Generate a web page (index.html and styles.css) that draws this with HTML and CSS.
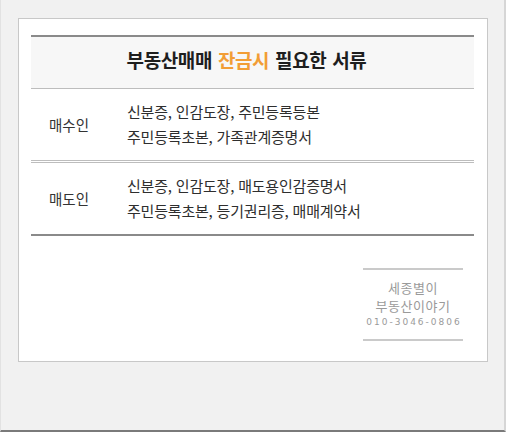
FILE: index.html
```html
<!DOCTYPE html>
<html lang="ko">
<head>
    <meta charset="UTF-8">
    <meta name="viewport" content="width=device-width, initial-scale=1.0">
    <title>잔금시 필요한 서류</title>
    <link rel="stylesheet" href="styles.css">
</head>
<body>

    <!-- Main white card -->
    <div class="card">

        <div class="doc-table">
            <!-- Title -->
            <div class="doc-title">
                부동산매매 <span class="highlight">잔금시</span> 필요한 서류
            </div>

            <!-- Buyer -->
            <div class="doc-row buyer">
                <div class="doc-label">매수인</div>
                <div class="doc-items">
                    신분증, 인감도장, 주민등록등본<br>
                    주민등록초본, 가족관계증명서
                </div>
            </div>

            <!-- Seller -->
            <div class="doc-row seller">
                <div class="doc-label">매도인</div>
                <div class="doc-items">
                    신분증, 인감도장, 매도용인감증명서<br>
                    주민등록초본, 등기권리증, 매매계약서
                </div>
            </div>
        </div>

        <!-- Signature -->
        <div class="signature">
            <div class="sig-name">세종별이</div>
            <div class="sig-name">부동산이야기</div>
            <div class="sig-phone">010-3046-0806</div>
        </div>

    </div>

</body>
</html>
```

FILE: styles.css
```css
* {
    box-sizing: border-box;
}
body {
    margin: 0;
    height: 432px;
    background-color: #f1f1f1;
    border-left: 1px solid #e2e2e2;
    border-right: 2px solid #d6d6d6;
    border-bottom: 2px solid #7a7a7a;
    padding-top: 18px;
    padding-left: 17px;
    font-family: 'Noto Sans CJK KR', 'Noto Sans', sans-serif;
    color: #333;
}
.card {
    width: 470px;
    height: 344px;
    background-color: #fff;
    border: 1px solid #c8c8c8;
    padding: 16px 13px 0 12px;
    display: flex;
    flex-direction: column;
}
.doc-table {
    border-top: 2px solid #8a8a8a;
    border-bottom: 2px solid #8a8a8a;
}
.doc-title {
    height: 52px;
    line-height: 46px;
    padding-right: 12px;
    background-color: #f7f7f7;
    border-bottom: 1px solid #bdbdbd;
    text-align: center;
    font-size: 19px;
    font-weight: 700;
    letter-spacing: -0.4px;
    word-spacing: 1px;
    color: #1e1e1e;
}
.highlight {
    color: #f29d35;
}
.doc-row {
    display: flex;
    align-items: center;
    padding: 10px 0 11px;
}
.doc-row.buyer {
    border-bottom: 3px double #bdbdbd;
}
.doc-label {
    width: 96px;
    padding-left: 18px;
    font-size: 14.5px;
    color: #333;
}
.doc-items {
    font-size: 15px;
    line-height: 25px;
    letter-spacing: -0.2px;
    color: #2e2e2e;
}
.signature {
    align-self: flex-end;
    width: 100px;
    margin-top: 32px;
    margin-right: 11px;
    border-top: 2px solid #cacaca;
    border-bottom: 2px solid #cacaca;
    padding: 9px 0 10px;
    text-align: center;
    color: #9a9a9a;
}
.sig-name {
    font-size: 13px;
    line-height: 18px;
    letter-spacing: 0.5px;
}
.sig-phone {
    font-family: 'DejaVu Sans', sans-serif;
    font-size: 9px;
    line-height: 14px;
    letter-spacing: 2px;
    margin-right: -2px;
}
```
